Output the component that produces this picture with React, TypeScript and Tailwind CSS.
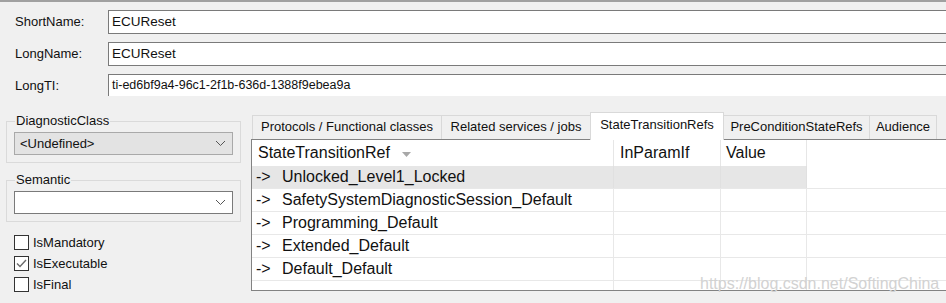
import React from "react";

const Chevron = () => (
  <svg width="11" height="7" viewBox="0 0 11 7" className="shrink-0">
    <polyline points="1,1 5.5,5.5 10,1" fill="none" stroke="#555" strokeWidth="1" />
  </svg>
);

const Field = ({ label, value, open }: { label: string; value: string; open?: boolean }) => (
  <div className="flex items-center h-[24px]">
    <div className="w-[108px] pl-[15px] text-[13px] leading-[16px]">{label}</div>
    <div
      className={
        open
          ? "flex-1 h-[22px] -mr-[4px] bg-white border-t border-l border-[#7a7a7a] pl-[3px] text-[12.5px] leading-[21px] self-start"
          : "flex-1 h-[24px] -mr-[4px] bg-white border border-[#7a7a7a] pl-[3px] text-[13.5px] leading-[22px]"
      }
    >
      {value}
    </div>
  </div>
);

const Group = ({ legend, value, gray, mt }: { legend: string; value: string; gray?: boolean; mt: string }) => (
  <div className={`relative border border-[#dadada] h-[42px] pt-[10px] px-[7px] ${mt}`}>
    <div className="absolute -top-[9px] left-[8px] px-[1px] bg-[#f0f0f0] text-[13px] leading-[16px]">{legend}</div>
    <div
      className={`h-[23px] flex items-center justify-between pl-[5px] pr-[6px] border ${
        gray ? "bg-[#e3e3e3] border-[#a9a9a9]" : "bg-white border-[#7a7a7a]"
      } text-[13px]`}
    >
      <span>{value}</span>
      <Chevron />
    </div>
  </div>
);

const Check = ({ label, checked }: { label: string; checked?: boolean }) => (
  <div className="flex items-center h-[21px]">
    <div className="w-[15px] h-[15px] ml-[8px] border border-[#333] bg-white flex items-center justify-center">
      {checked && (
        <svg width="11" height="9" viewBox="0 0 11 9">
          <polyline points="1,4.5 4,7.5 10,1" fill="none" stroke="#6a6a6a" strokeWidth="1.4" />
        </svg>
      )}
    </div>
    <span className="ml-[4px] text-[13px] leading-[16px]">{label}</span>
  </div>
);

const tabs = [
  { t: "Protocols / Functional classes", w: "w-[190px]" },
  { t: "Related services / jobs", w: "w-[150px]" },
  { t: "StateTransitionRefs", w: "w-[134px]", active: true },
  { t: "PreConditionStateRefs", w: "w-[147px]" },
  { t: "Audience", w: "w-[68px]" },
];

const rows = [
  "Unlocked_Level1_Locked",
  "SafetySystemDiagnosticSession_Default",
  "Programming_Default",
  "Extended_Default",
  "Default_Default",
];

export default function App() {
  return (
    <div className="relative w-[946px] h-[303px] overflow-hidden bg-[#f0f0f0] border-t-2 border-[#a0a0a0] font-['Liberation_Sans',Arial,sans-serif] text-[#111]">
      <div className="flex flex-col pt-[8px] gap-[8px]">
        <Field label="ShortName:" value="ECUReset" />
        <Field label="LongName:" value="ECUReset" />
        <Field label="LongTI:" value="ti-ed6bf9a4-96c1-2f1b-636d-1388f9ebea9a" open />
      </div>

      <div className="flex mt-[2px]">
        {/* left column */}
        <div className="ml-[6px] w-[235px] flex flex-col">
          <Group legend="DiagnosticClass" value="<Undefined>" gray mt="mt-[21px]" />
          <Group legend="Semantic" value="" mt="mt-[17px]" />
          <div className="mt-[10px] flex flex-col">
            <Check label="IsMandatory" />
            <Check label="IsExecutable" checked />
            <Check label="IsFinal" />
          </div>
        </div>

        {/* right column */}
        <div className="ml-[10px] flex-1 -mr-[4px] flex flex-col">
          <div className="flex items-end h-[39px] pl-[1px]">
            {tabs.map((tab, i) =>
              tab.active ? (
                <div
                  key={i}
                  className={`${tab.w} -ml-px h-[28px] -mb-px relative z-10 bg-white border border-b-0 border-[#d9d9d9] text-[13px] leading-[22px] text-center pt-[1px]`}
                >
                  {tab.t}
                </div>
              ) : (
                <div
                  key={i}
                  className={`${tab.w} ${i === 0 ? "" : "-ml-px"} h-[24px] bg-[#f0f0f0] border border-b-0 border-[#d9d9d9] text-[13px] leading-[22px] text-center`}
                >
                  {tab.t}
                </div>
              )
            )}
          </div>
          <div className="h-[152px] bg-white border border-[#828282] flex flex-col">
            <div className="flex h-[26px] text-[16px] leading-[20px] items-stretch">
              <div className="w-[362px] border-r border-[#e6e6e6] flex items-center pl-[6px]">
                <span>StateTransitionRef</span>
                <svg width="9" height="5" viewBox="0 0 9 5" className="ml-[12px] mt-[2px]">
                  <polygon points="0,0 9,0 4.5,5" fill="#a8a8a8" />
                </svg>
              </div>
              <div className="w-[107px] border-r border-[#e6e6e6] flex items-center pl-[6px]">InParamIf</div>
              <div className="w-[86px] border-r border-[#e6e6e6] flex items-center pl-[5px]">Value</div>
              <div className="flex-1" />
            </div>
            {rows.map((r, i) => (
              <div key={i} className="flex h-[23px] border-b border-[#e8e8e8] text-[16px] leading-[20px]">
                <div
                  className={`w-[362px] border-r ${i === 0 ? "bg-[#e6e6e6] border-[#e0e0e0]" : "border-[#e8e8e8]"} flex items-center pl-[4px]`}
                >
                  <span className="w-[26px]">-&gt;</span>
                  <span>{r}</span>
                </div>
                <div className={`w-[107px] border-r ${i === 0 ? "bg-[#e6e6e6] border-[#e0e0e0]" : "border-[#e8e8e8]"}`} />
                <div className={`w-[86px] border-r ${i === 0 ? "bg-[#e6e6e6] border-[#e0e0e0]" : "border-[#e8e8e8]"}`} />
                <div className="flex-1" />
              </div>
            ))}
            <div className="flex flex-1">
              <div className="w-[362px] border-r border-[#e8e8e8]" />
              <div className="w-[107px] border-r border-[#e8e8e8]" />
              <div className="w-[86px] border-r border-[#e8e8e8]" />
            </div>
          </div>
        </div>
      </div>

      <div className="absolute left-[700px] top-[273px] text-[16px] leading-[18px] text-[#d2d2d2] whitespace-nowrap">
        https://blog.csdn.net/SoftingChina
      </div>
    </div>
  );
}
